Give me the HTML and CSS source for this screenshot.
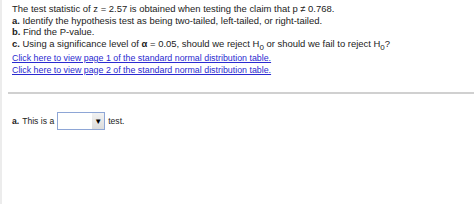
FILE: index.html
```html
<!DOCTYPE html>
<html lang="en">
<head>
    <meta charset="UTF-8">
    <title>Hypothesis test question</title>
    <link rel="stylesheet" href="styles.css">
</head>
<body>
    <div class="page">
        <!-- question -->
        <div class="question">
            <p>The test statistic of z = 2.57 is obtained when testing the claim that p &ne; 0.768.</p>
            <p><b>a.</b> Identify the hypothesis test as being two-tailed, left-tailed, or right-tailed.</p>
            <p><b>b.</b> Find the P-value.</p>
            <p><b>c.</b> Using a significance level of <span class="greek">&alpha;</span> = 0.05, should we reject H<sub>0</sub> or should we fail to reject H<sub>0</sub>?</p>
            <p class="links">
                <a href="#">Click here to view page 1 of the standard normal distribution table.</a><br>
                <a href="#">Click here to view page 2 of the standard normal distribution table.</a>
            </p>
        </div>
        <hr class="divider">
        <!-- answer -->
        <div class="answer">
            <b>a.</b> This is a
            <span class="dropdown">
                <span class="dropdown-value"></span>
                <span class="dropdown-arrow">&#9660;</span>
            </span>
            test.
        </div>
    </div>
</body>
</html>
```
FILE: styles.css
```css
body {
    margin: 0;
    font-family: 'Liberation Sans', Arial, sans-serif;
    font-size: 9.45px;
    color: #222;
    background: #fff;
}
.page {
    border-left: 2px solid #ececec;
    min-height: 204px;
    box-sizing: border-box;
    padding: 3px 0 0 10px;
}
.question p {
    margin: 0;
    line-height: 11.7px;
}
.question b,
.answer b {
    font-weight: bold;
}
.greek {
    font-weight: bold;
}
sub {
    font-size: 8px;
    line-height: 0;
    vertical-align: -3px;
}
.question .links {
    margin-top: 3px;
    font-size: 8.85px;
}
.links a {
    color: #2a2ad0;
    text-decoration: underline;
}
.divider {
    border: none;
    border-top: 2px solid #d0d0d0;
    margin: 16px 0 0 -4px;
}
.answer {
    display: flex;
    align-items: center;
    gap: 3px;
    margin-top: 18px;
    font-size: 8.6px;
}
.dropdown {
    display: flex;
    width: 48px;
    height: 18px;
    box-sizing: border-box;
    border: 1px solid #8ea6d6;
    background: #fff;
}
.dropdown-value {
    flex: 1;
}
.dropdown-arrow {
    width: 12px;
    background: linear-gradient(#f2f2f2, #dcdcdc);
    font-size: 8px;
    display: flex;
    align-items: center;
    justify-content: center;
    color: #000;
}
```
